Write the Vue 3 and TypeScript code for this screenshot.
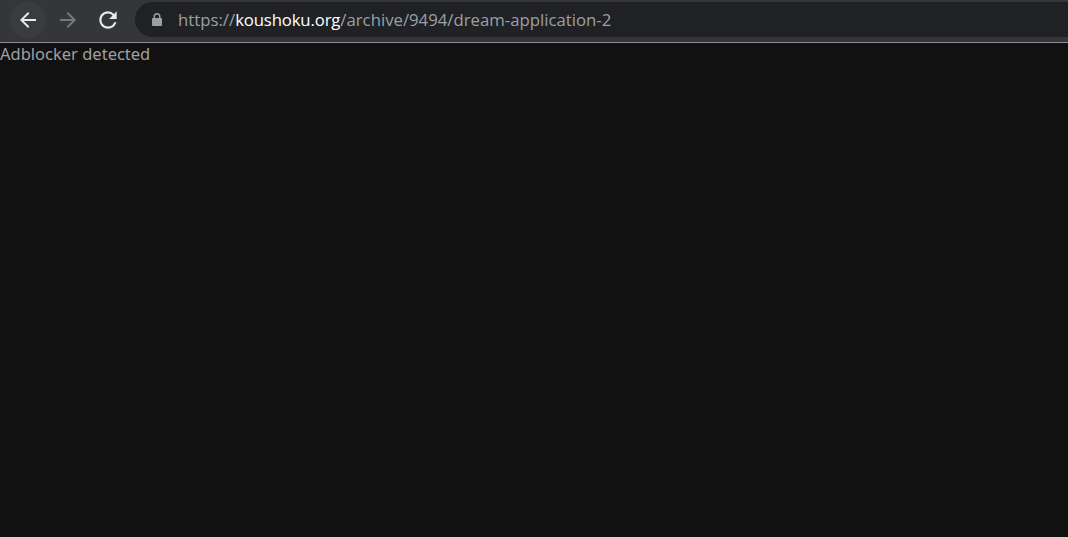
<script setup lang="ts">
const scheme = 'https://'
const host = 'koushoku.org'
const path = '/archive/9494/dream-application-2'
</script>

<template>
  <div class="page">
    <header class="toolbar">
      <button class="nav active" aria-label="Back">
        <svg width="24" height="24" viewBox="0 0 24 24"><path d="M20 11H7.83l5.59-5.59L12 4l-8 8 8 8 1.41-1.41L7.83 13H20v-2z" fill="#e8eaed" /></svg>
      </button>
      <button class="nav" aria-label="Forward">
        <svg width="24" height="24" viewBox="0 0 24 24"><path d="M12 4l-1.41 1.41L16.17 11H4v2h12.17l-5.58 5.59L12 20l8-8z" fill="#77787b" /></svg>
      </button>
      <button class="nav" aria-label="Reload">
        <svg width="26" height="26" viewBox="0 0 24 24"><path d="M17.65 6.35A7.958 7.958 0 0 0 12 4c-4.42 0-7.99 3.58-7.99 8s3.57 8 7.99 8c3.73 0 6.84-2.55 7.73-6h-2.08A5.99 5.99 0 0 1 12 18c-3.31 0-6-2.69-6-6s2.69-6 6-6c1.66 0 3.14.69 4.22 1.78L13 11h7V4l-2.35 2.35z" fill="#e8eaed" /></svg>
      </button>
      <div class="omnibox">
        <svg class="lock" width="12" height="14" viewBox="0 0 12 14"><path d="M10 5H9.5V3.5a3.5 3.5 0 0 0-7 0V5H2a1 1 0 0 0-1 1v6a1 1 0 0 0 1 1h8a1 1 0 0 0 1-1V6a1 1 0 0 0-1-1zM4 3.5a2 2 0 0 1 4 0V5H4V3.5z" fill="#9aa0a6" /></svg>
        <span class="url">{{ scheme }}<span class="host">{{ host }}</span>{{ path }}</span>
      </div>
    </header>
    <main class="content">Adblocker detected</main>
  </div>
</template>

<style scoped>
.page {
  min-height: 537px;
  background: #111111;
  display: flex;
  flex-direction: column;
}
.toolbar {
  height: 42px;
  box-sizing: border-box;
  background: #35363a;
  display: flex;
  align-items: center;
  padding: 0 0 3px 10px;
  box-shadow: 0 1px 0 #8f8f8f;
  flex: none;
}
.nav {
  width: 36px;
  height: 36px;
  border: 0;
  padding: 0;
  margin-right: 4px;
  border-radius: 50%;
  background: transparent;
  display: flex;
  align-items: center;
  justify-content: center;
}
.nav.active {
  background: #3a3b3f;
}
.omnibox {
  flex: 1;
  height: 35px;
  margin-left: 5px;
  background: #202124;
  border-radius: 17.5px 0 0 17.5px;
  display: flex;
  align-items: center;
  padding-left: 16px;
}
.lock {
  margin-right: 15px;
}
.url {
  font-family: "Open Sans", "Noto Sans", sans-serif;
  font-size: 16.75px;
  color: #9aa0a6;
  white-space: nowrap;
}
.host {
  color: #ffffff;
  letter-spacing: -0.15px;
}
.content {
  margin-top: 1px;
  font-family: "Noto Sans", sans-serif;
  font-size: 16.5px;
  line-height: 22px;
  color: #a0a0a0;
}
</style>

<style>
body {
  background: #111111;
}
</style>
